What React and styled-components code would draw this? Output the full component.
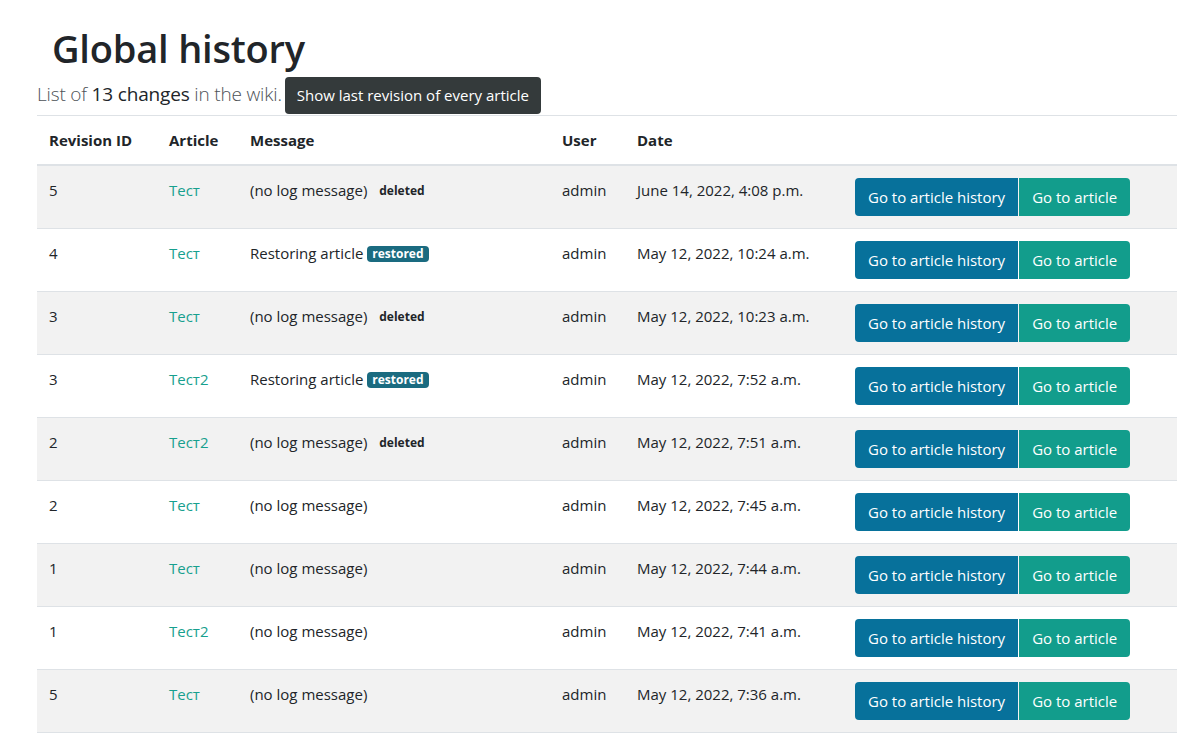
import React from 'react';
import styled, { createGlobalStyle } from 'styled-components';

const GlobalStyle = createGlobalStyle`
  body {
    margin: 0;
    background: #ffffff;
    color: #212529;
    font-family: "Open Sans", "Noto Sans", sans-serif;
    font-size: 15px;
    line-height: 24px;
  }
`;

const Page = styled.main`
  padding: 24px 19px 0 37px;
`;

const Title = styled.h1`
  margin: 0 0 0 15px;
  font-size: 38px;
  font-weight: 600;
  line-height: 48px;
  letter-spacing: -0.2px;
`;

const Lead = styled.div`
  display: flex;
  align-items: center;
  height: 37px;
  margin: 5px 0 1px;
  font-size: 19px;
  font-weight: 300;
  letter-spacing: -0.17px;
  color: #4d5257;

  span:first-child {
    margin-top: -3px;
  }

  strong {
    font-weight: 400;
    color: #212529;
  }
`;

const TipButton = styled.span`
  margin-left: 3px;
  padding: 6px 12px;
  border-radius: 4px;
  background: #343a3b;
  color: #ffffff;
  font-size: 15px;
  font-weight: 400;
  letter-spacing: 0;
  line-height: 25px;
`;

const Table = styled.table`
  width: 1140px;
  border-collapse: collapse;
  table-layout: fixed;
  border-top: 1px solid #dee2e6;
`;

const HeadCell = styled.th`
  padding: 12px;
  text-align: left;
  font-weight: 700;
  border-bottom: 2px solid #dee2e6;
`;

const Row = styled.tr`
  background: ${(p) => (p.$striped ? '#f2f2f2' : '#ffffff')};
  border-bottom: 1px solid #dee2e6;
`;

const Cell = styled.td`
  padding: 12px;
  vertical-align: top;
`;

const ArticleLink = styled.a`
  color: #17a08e;
  text-decoration: none;
`;

const Badge = styled.span`
  display: inline-block;
  margin-left: ${(p) => (p.$filled ? '0' : '3px')};
  padding: 0 5px;
  border-radius: 4px;
  background: ${(p) => (p.$filled ? '#1a6b80' : 'transparent')};
  color: ${(p) => (p.$filled ? '#ffffff' : '#212529')};
  font-size: 12px;
  font-weight: 700;
  line-height: 16px;
  vertical-align: 1px;
`;

const ButtonGroup = styled.div`
  display: inline-flex;
`;

const Button = styled.a`
  display: inline-block;
  padding: 6px 12px;
  border: 1px solid transparent;
  background: ${(p) => p.$bg};
  color: #ffffff;
  line-height: 24px;
  text-decoration: none;
  border-radius: ${(p) => (p.$first ? '4px 0 0 4px' : '0 4px 4px 0')};
  margin-left: ${(p) => (p.$first ? '0' : '1px')};
`;

const rows = [
  { id: 5, article: 'Тест', msg: '(no log message)', badge: 'deleted', date: 'June 14, 2022, 4:08 p.m.' },
  { id: 4, article: 'Тест', msg: 'Restoring article', badge: 'restored', date: 'May 12, 2022, 10:24 a.m.' },
  { id: 3, article: 'Тест', msg: '(no log message)', badge: 'deleted', date: 'May 12, 2022, 10:23 a.m.' },
  { id: 3, article: 'Тест2', msg: 'Restoring article', badge: 'restored', date: 'May 12, 2022, 7:52 a.m.' },
  { id: 2, article: 'Тест2', msg: '(no log message)', badge: 'deleted', date: 'May 12, 2022, 7:51 a.m.' },
  { id: 2, article: 'Тест', msg: '(no log message)', date: 'May 12, 2022, 7:45 a.m.' },
  { id: 1, article: 'Тест', msg: '(no log message)', date: 'May 12, 2022, 7:44 a.m.' },
  { id: 1, article: 'Тест2', msg: '(no log message)', date: 'May 12, 2022, 7:41 a.m.' },
  { id: 5, article: 'Тест', msg: '(no log message)', date: 'May 12, 2022, 7:36 a.m.' },
];

export default function App() {
  return (
    <>
      <GlobalStyle />
      <Page>
        <Title>Global history</Title>
        <Lead>
          <span>
            List of <strong>13 changes</strong> in the wiki.
          </span>
          <TipButton>Show last revision of every article</TipButton>
        </Lead>
        <Table>
          <colgroup>
            <col style={{ width: 120 }} />
            <col style={{ width: 81 }} />
            <col style={{ width: 312 }} />
            <col style={{ width: 75 }} />
            <col style={{ width: 218 }} />
            <col style={{ width: 334 }} />
          </colgroup>
          <thead>
            <tr>
              <HeadCell>Revision ID</HeadCell>
              <HeadCell>Article</HeadCell>
              <HeadCell>Message</HeadCell>
              <HeadCell>User</HeadCell>
              <HeadCell>Date</HeadCell>
              <HeadCell />
            </tr>
          </thead>
          <tbody>
            {rows.map((r, i) => (
              <Row key={i} $striped={i % 2 === 0}>
                <Cell>{r.id}</Cell>
                <Cell>
                  <ArticleLink href="#">{r.article}</ArticleLink>
                </Cell>
                <Cell>
                  {r.msg}
                  {r.badge && (
                    <>
                      {' '}
                      <Badge $filled={r.badge === 'restored'}>{r.badge}</Badge>
                    </>
                  )}
                </Cell>
                <Cell>admin</Cell>
                <Cell>{r.date}</Cell>
                <Cell>
                  <ButtonGroup>
                    <Button href="#" $first $bg="#07719b">
                      Go to article history
                    </Button>
                    <Button href="#" $bg="#129d8c">
                      Go to article
                    </Button>
                  </ButtonGroup>
                </Cell>
              </Row>
            ))}
          </tbody>
        </Table>
      </Page>
    </>
  );
}
